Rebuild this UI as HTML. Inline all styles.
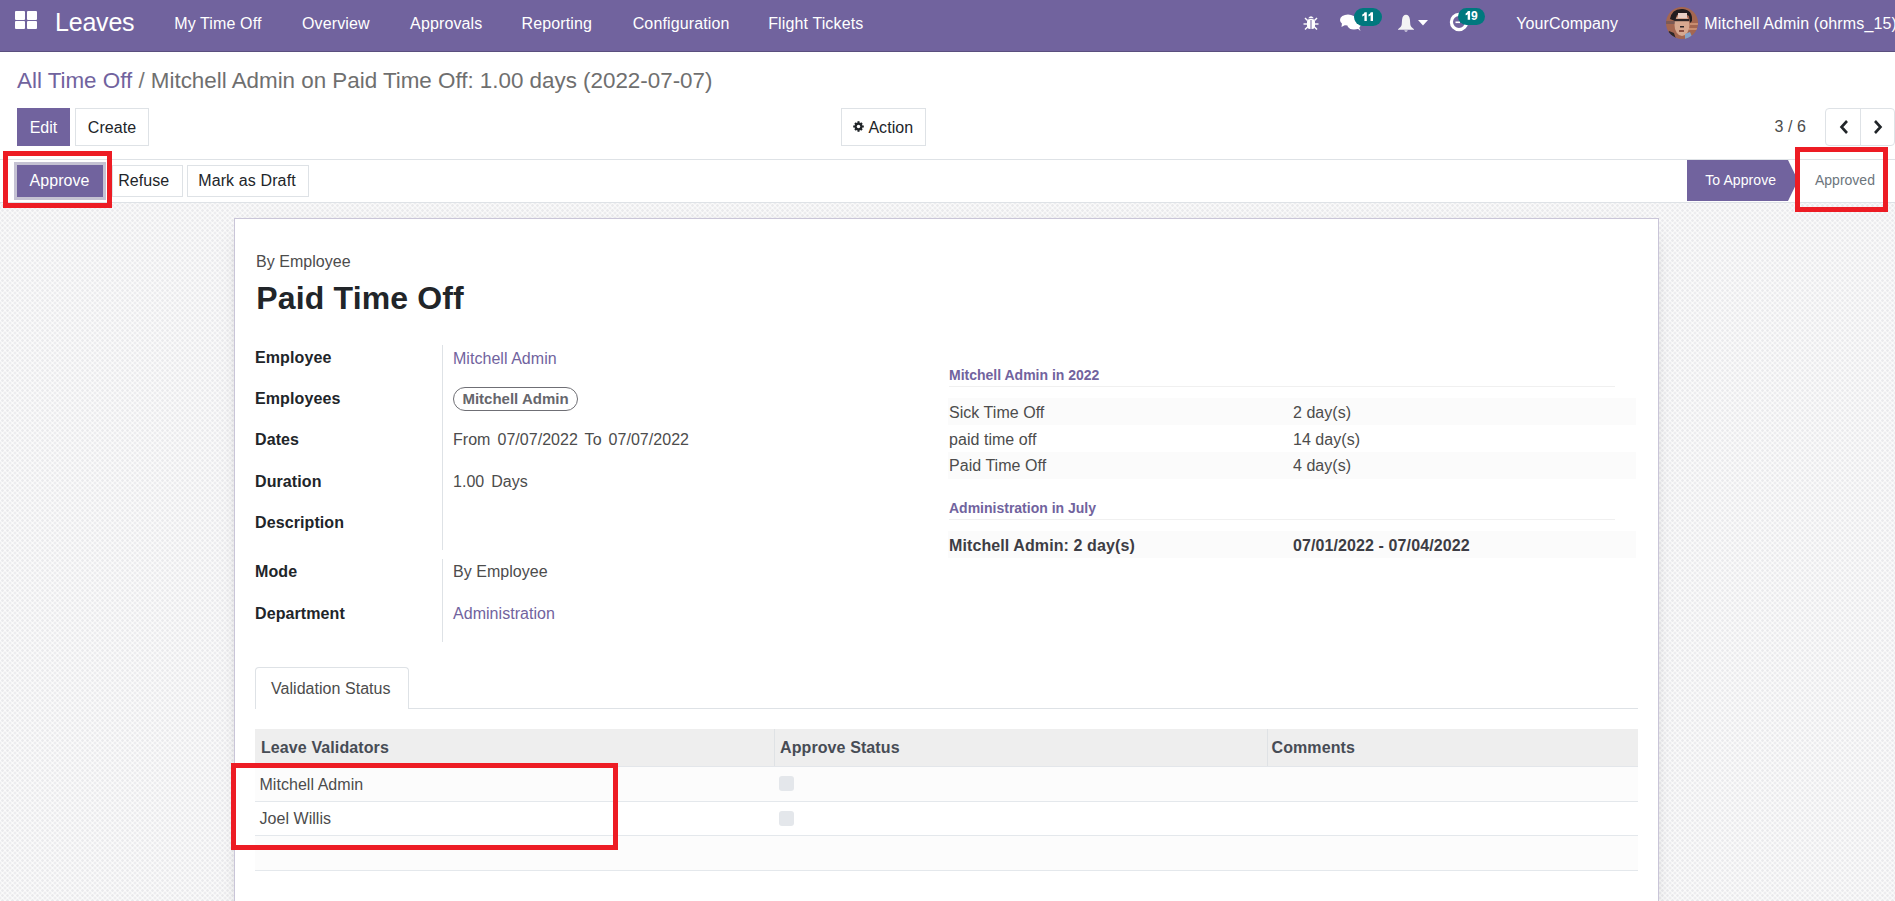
<!DOCTYPE html>
<html><head><meta charset="utf-8"><title>Leaves</title>
<style>
html,body{margin:0;padding:0;width:1895px;height:901px;overflow:hidden;background:#fff;}
body{position:relative;font-family:"Liberation Sans", sans-serif;}
.t{position:absolute;white-space:nowrap;}
.r{position:absolute;}
</style></head><body>
<div class="r" style="left:0px;top:0px;width:1895px;height:51px;background:#71639e"></div>
<div class="r" style="left:0px;top:51px;width:1895px;height:1px;background:#5a4f7e"></div>
<div class="r" style="left:15px;top:11px;width:10px;height:9px;background:#fff;border-radius:1px"></div>
<div class="r" style="left:26.5px;top:11px;width:10.5px;height:9px;background:#fff;border-radius:1px"></div>
<div class="r" style="left:15px;top:21px;width:10px;height:8px;background:#fff;border-radius:1px"></div>
<div class="r" style="left:26.5px;top:21px;width:10.5px;height:8px;background:#fff;border-radius:1px"></div>
<div class="t" style="left:55px;top:7.03px;font-size:25px;line-height:31px;font-weight:400;color:#fff;letter-spacing:-0.2px">Leaves</div>
<div class="t" style="left:174.2px;top:14.05px;font-size:16px;line-height:20px;font-weight:400;color:#fff;letter-spacing:0.13px">My Time Off</div>
<div class="t" style="left:302px;top:14.05px;font-size:16px;line-height:20px;font-weight:400;color:#fff;letter-spacing:0.13px">Overview</div>
<div class="t" style="left:410.1px;top:14.05px;font-size:16px;line-height:20px;font-weight:400;color:#fff;letter-spacing:0.13px">Approvals</div>
<div class="t" style="left:521.5px;top:14.05px;font-size:16px;line-height:20px;font-weight:400;color:#fff;letter-spacing:0.13px">Reporting</div>
<div class="t" style="left:632.7px;top:14.05px;font-size:16px;line-height:20px;font-weight:400;color:#fff;letter-spacing:0.13px">Configuration</div>
<div class="t" style="left:768.2px;top:14.05px;font-size:16px;line-height:20px;font-weight:400;color:#fff;letter-spacing:0.13px">Flight Tickets</div>
<div class="t" style="left:1516.3px;top:13.95px;font-size:16px;line-height:20px;font-weight:400;color:#fff;letter-spacing:0.1px">YourCompany</div>
<div class="t" style="left:1704.3px;top:13.95px;font-size:16px;line-height:20px;font-weight:400;color:#fff;letter-spacing:0.13px">Mitchell Admin (ohrms_15)</div>
<svg class="r" style="left:1666px;top:7px" width="32" height="32" viewBox="0 0 32 32">
<defs><clipPath id="av"><circle cx="16" cy="16" r="16"/></clipPath></defs>
<g clip-path="url(#av)">
<rect width="32" height="32" fill="#a46650"/>
<rect x="0" y="14" width="9" height="3" fill="#7d5a55"/>
<rect x="24" y="16" width="8" height="2" fill="#c98d70"/>
<rect x="23" y="21" width="9" height="2" fill="#c98d70"/>
<path d="M4 12 Q6 1 17 2 Q27 3 26 14 L24 16 L23 9 Q17 5 11 8 L9 14 Z" fill="#211c1e"/>
<ellipse cx="16" cy="18" rx="7.5" ry="11" fill="#d7a890"/>
<rect x="12" y="6" width="9" height="5" fill="#e8cfc5"/>
<rect x="9" y="12" width="14" height="2.2" fill="#2a2326"/>
<rect x="14" y="19" width="4" height="1.5" fill="#2a2326"/>
<rect x="13" y="23" width="5" height="2" fill="#8b4f42"/>
<path d="M19 27 L24 25 L27 32 L19 32 Z" fill="#86a3c8"/>
<path d="M3 24 L8 26 L10 32 L0 32 Z" fill="#2c2628"/>
</g></svg>
<svg class="r" style="left:1302px;top:12.5px" width="18" height="18" viewBox="0 0 18 18">
<g fill="#fff" stroke="#fff">
<path d="M6.2 5.2 Q9 1.2 11.8 5.2 Z" stroke="none"/>
<rect x="5" y="6" width="8" height="10" rx="3" stroke="none"/>
<line x1="3" y1="5" x2="5.5" y2="7.5" stroke-width="1.4"/><line x1="15" y1="5" x2="12.5" y2="7.5" stroke-width="1.4"/>
<line x1="1.5" y1="11" x2="5" y2="11" stroke-width="1.4"/><line x1="16.5" y1="11" x2="13" y2="11" stroke-width="1.4"/>
<line x1="3" y1="16.5" x2="5.5" y2="14" stroke-width="1.4"/><line x1="15" y1="16.5" x2="12.5" y2="14" stroke-width="1.4"/>
</g><line x1="9" y1="7" x2="9" y2="16" stroke="#71639e" stroke-width="1"/></svg>
<svg class="r" style="left:1339px;top:13px" width="24" height="20" viewBox="0 0 24 20">
<g fill="#fff">
<ellipse cx="9" cy="7" rx="8" ry="5.6"/>
<path d="M3 10 L2.5 14 L7 11.5 Z"/>
<ellipse cx="15" cy="12.5" rx="6.5" ry="4" />
<path d="M18 15 L21.5 18 L19.5 13 Z"/>
</g></svg>
<div class="r" style="left:1354px;top:8px;width:28px;height:18px;background:#00787e;border-radius:9px"></div>
<svg class="r" style="left:1397px;top:14px" width="18" height="19" viewBox="0 0 18 19">
<path fill="#f4f4f4" d="M9 0.8 C6.9 0.8 5.4 2.5 5.1 5.5 L4.7 10.5 C4.5 12.2 3.1 13.7 1 15.2 L1 15.8 L17 15.8 L17 15.2 C14.9 13.7 13.5 12.2 13.3 10.5 L12.9 5.5 C12.6 2.5 11.1 0.8 9 0.8 Z"/>
<path fill="#fff" d="M7.2 16.4 Q9 18.8 10.8 16.4 Z"/>
</svg>
<svg class="r" style="left:1418px;top:19.5px" width="10" height="6" viewBox="0 0 10 6"><path d="M0 0 L10 0 L5 5.5 Z" fill="#fff"/></svg>
<svg class="r" style="left:1449px;top:12px" width="22" height="20" viewBox="0 0 22 20">
<circle cx="10" cy="10" r="7.6" fill="none" stroke="#fff" stroke-width="3.2"/>
<rect x="6.5" y="9.5" width="4.5" height="1.6" fill="#fff"/></svg>
<div class="r" style="left:1458px;top:8px;width:27px;height:17px;background:#00787e;border-radius:8.5px"></div>
<div class="t" style="left:1471px;top:8.84px;font-size:12px;line-height:15px;font-weight:700;color:#fff;">9</div>
<svg class="r" style="left:0;top:0" width="1895" height="40"><path fill="#fff" d="M1364.3999999999999 12.2 H1366.8 V20.9 H1364.3999999999999 V15.299999999999999 Q1363.3999999999999 16.099999999999998 1362.3 16.4 V14.5 Q1363.8999999999999 13.899999999999999 1364.6 12.2 Z M1370.6 12.2 H1373.0 V20.9 H1370.6 V15.299999999999999 Q1369.6 16.099999999999998 1368.5 16.4 V14.5 Q1370.1 13.899999999999999 1370.8 12.2 Z M1467.6999999999998 11.1 H1470.1 V19.8 H1467.6999999999998 V14.2 Q1466.6999999999998 15.0 1465.6 15.3 V13.399999999999999 Q1467.1999999999998 12.799999999999999 1467.8999999999999 11.1 Z"/></svg>
<div class="t" style="left:17px;top:66.53px;font-size:22.4px;line-height:28px;font-weight:400;color:#6f6f6f;letter-spacing:-0.01px"><span style="color:#71639e">All Time Off</span> <span style="color:#777">/</span> Mitchell Admin on Paid Time Off: 1.00 days (2022-07-07)</div>
<div class="r" style="left:17px;top:108px;width:53px;height:38px;background:#71639e"></div>
<div class="t" style="left:17px;top:118.15px;font-size:16px;line-height:20px;font-weight:400;color:#fff;letter-spacing:0.04px;width:53px;text-align:center">Edit</div>
<div class="r" style="left:75px;top:108px;width:74px;height:38px;background:#fff;border:1px solid #dee2e6;box-sizing:border-box"></div>
<div class="t" style="left:75px;top:118.15px;font-size:16px;line-height:20px;font-weight:400;color:#212529;letter-spacing:0.04px;width:74px;text-align:center">Create</div>
<div class="r" style="left:841px;top:108px;width:85px;height:38px;background:#fff;border:1px solid #dee2e6;box-sizing:border-box"></div>
<svg class="r" style="left:853px;top:121px" width="11" height="11" viewBox="0 0 12 12">
<g fill="#212529"><circle cx="6" cy="6" r="4.3"/>
<rect x="4.9" y="0.2" width="2.2" height="11.6"/><rect x="0.2" y="4.9" width="11.6" height="2.2"/>
<rect x="4.9" y="0.6" width="2.2" height="10.8" transform="rotate(45 6 6)"/><rect x="0.6" y="4.9" width="10.8" height="2.2" transform="rotate(45 6 6)"/>
</g><circle cx="6" cy="6" r="1.9" fill="#fff"/></svg>
<div class="t" style="left:868.4px;top:118.15px;font-size:16px;line-height:20px;font-weight:400;color:#212529;letter-spacing:0.04px;">Action</div>
<div class="t" style="left:1774.5px;top:116.75px;font-size:16px;line-height:20px;font-weight:400;color:#4c4c4c;letter-spacing:0.04px;">3 / 6</div>
<div class="r" style="left:1825px;top:108px;width:70px;height:38px;background:#fff;border:1px solid #dee2e6;box-sizing:border-box;border-radius:4px"></div>
<div class="r" style="left:1860px;top:108px;width:1px;height:38px;background:#dee2e6"></div>
<svg class="r" style="left:1838px;top:119px" width="12" height="16" viewBox="0 0 12 16"><path d="M9 2 L3.5 8 L9 14" fill="none" stroke="#212529" stroke-width="2.6"/></svg>
<svg class="r" style="left:1872px;top:119px" width="12" height="16" viewBox="0 0 12 16"><path d="M3 2 L8.5 8 L3 14" fill="none" stroke="#212529" stroke-width="2.6"/></svg>
<div class="r" style="left:0px;top:159px;width:1895px;height:1px;background:#dee2e6"></div>
<div class="r" style="left:0px;top:160px;width:1895px;height:42px;background:#fff"></div>
<div class="r" style="left:0px;top:202px;width:1895px;height:1px;background:#dee2e6"></div>
<div class="r" style="left:14px;top:162px;width:92px;height:38px;background:#c5c2d3"></div>
<div class="r" style="left:17px;top:165px;width:86px;height:32px;background:#71639e"></div>
<div class="t" style="left:16.5px;top:170.85px;font-size:16px;line-height:20px;font-weight:400;color:#fff;letter-spacing:0.04px;width:86px;text-align:center">Approve</div>
<div class="r" style="left:111.5px;top:165px;width:71px;height:32px;background:#fff;border:1px solid #dee2e6;box-sizing:border-box"></div>
<div class="t" style="left:118.2px;top:170.85px;font-size:16px;line-height:20px;font-weight:400;color:#212529;letter-spacing:0.04px;">Refuse</div>
<div class="r" style="left:187px;top:165px;width:122px;height:32px;background:#fff;border:1px solid #dee2e6;box-sizing:border-box"></div>
<div class="t" style="left:198.2px;top:170.85px;font-size:16px;line-height:20px;font-weight:400;color:#212529;letter-spacing:0.12px">Mark as Draft</div>
<svg class="r" style="left:1687px;top:160px" width="112" height="41" viewBox="0 0 112 41"><path d="M0 0 L101 0 L111 20.5 L101 41 L0 41 Z" fill="#71639e"/></svg>
<div class="t" style="left:1705.2px;top:171.15px;font-size:14px;line-height:18px;font-weight:400;color:#fff;letter-spacing:0.1px">To Approve</div>
<div class="t" style="left:1815px;top:171.15px;font-size:14px;line-height:18px;font-weight:400;color:#6c757d;">Approved</div>
<div class="r" style="left:0px;top:203px;width:1895px;height:698px;background-color:#fbfbfb;background-image:radial-gradient(circle, #e9e9ec 0.9px, rgba(233,233,236,0) 1.6px),radial-gradient(circle, #e9e9ec 0.9px, rgba(233,233,236,0) 1.6px);background-size:5px 5px;background-position:0 0, 2.5px 2.5px"></div>
<div class="r" style="left:234px;top:218px;width:1425px;height:700px;background:#fff;border:1px solid #c9c5d8;box-sizing:border-box;box-shadow:0 5px 20px -15px rgba(0,0,0,0.7)"></div>
<div class="t" style="left:256px;top:252.05px;font-size:16px;line-height:20px;font-weight:400;color:#4c4c4c;letter-spacing:0.04px;">By Employee</div>
<div class="t" style="left:256.3px;top:278.11px;font-size:32px;line-height:40px;font-weight:700;color:#212529;letter-spacing:0.15px">Paid Time Off</div>
<div class="t" style="left:255px;top:348.25px;font-size:16px;line-height:20px;font-weight:700;color:#212529;letter-spacing:0.1px;">Employee</div>
<div class="t" style="left:255px;top:389.15px;font-size:16px;line-height:20px;font-weight:700;color:#212529;letter-spacing:0.1px;">Employees</div>
<div class="t" style="left:255px;top:429.75px;font-size:16px;line-height:20px;font-weight:700;color:#212529;letter-spacing:0.1px;">Dates</div>
<div class="t" style="left:255px;top:472.25px;font-size:16px;line-height:20px;font-weight:700;color:#212529;letter-spacing:0.1px;">Duration</div>
<div class="t" style="left:255px;top:513.35px;font-size:16px;line-height:20px;font-weight:700;color:#212529;letter-spacing:0.1px;">Description</div>
<div class="t" style="left:255px;top:562.45px;font-size:16px;line-height:20px;font-weight:700;color:#212529;letter-spacing:0.1px;">Mode</div>
<div class="t" style="left:255px;top:604.35px;font-size:16px;line-height:20px;font-weight:700;color:#212529;letter-spacing:0.1px;">Department</div>
<div class="r" style="left:442px;top:345px;width:1px;height:205px;background:#dee2e6"></div>
<div class="r" style="left:442px;top:559px;width:1px;height:83px;background:#dee2e6"></div>
<div class="t" style="left:453px;top:349.15px;font-size:16px;line-height:20px;font-weight:400;color:#71639e;letter-spacing:0.04px;">Mitchell Admin</div>
<div class="r" style="left:453px;top:387.2px;width:125px;height:23.5px;border:1px solid #6f6f75;border-radius:12px;box-sizing:border-box"></div>
<div class="t" style="left:453px;top:388.80px;font-size:15px;line-height:19px;font-weight:700;color:#66666c;width:125px;text-align:center">Mitchell Admin</div>
<div class="t" style="left:453px;top:429.75px;font-size:16px;line-height:20px;font-weight:400;color:#4c4c4c;letter-spacing:0.04px;word-spacing:-1px">From&nbsp; 07/07/2022&nbsp; To&nbsp; 07/07/2022</div>
<div class="t" style="left:453px;top:472.25px;font-size:16px;line-height:20px;font-weight:400;color:#4c4c4c;letter-spacing:0.04px;word-spacing:-1px">1.00&nbsp; Days</div>
<div class="t" style="left:453px;top:562.45px;font-size:16px;line-height:20px;font-weight:400;color:#4c4c4c;letter-spacing:0.04px;">By Employee</div>
<div class="t" style="left:453px;top:604.35px;font-size:16px;line-height:20px;font-weight:400;color:#71639e;letter-spacing:0.04px;">Administration</div>
<div class="t" style="left:949px;top:365.75px;font-size:14px;line-height:18px;font-weight:700;color:#71639e;">Mitchell Admin in 2022</div>
<div class="r" style="left:949px;top:386px;width:666px;height:1px;background:#f0f0f0"></div>
<div class="r" style="left:948px;top:398px;width:688px;height:27px;background:#fbfbfb"></div>
<div class="r" style="left:948px;top:452px;width:688px;height:26.5px;background:#fbfbfb"></div>
<div class="t" style="left:949px;top:402.85px;font-size:16px;line-height:20px;font-weight:400;color:#4c4c4c;letter-spacing:0.04px;">Sick Time Off</div>
<div class="t" style="left:1293px;top:402.85px;font-size:16px;line-height:20px;font-weight:400;color:#4c4c4c;letter-spacing:0.04px;">2 day(s)</div>
<div class="t" style="left:949px;top:430.05px;font-size:16px;line-height:20px;font-weight:400;color:#4c4c4c;letter-spacing:0.04px;">paid time off</div>
<div class="t" style="left:1293px;top:430.05px;font-size:16px;line-height:20px;font-weight:400;color:#4c4c4c;letter-spacing:0.04px;">14 day(s)</div>
<div class="t" style="left:949px;top:455.55px;font-size:16px;line-height:20px;font-weight:400;color:#4c4c4c;letter-spacing:0.04px;">Paid Time Off</div>
<div class="t" style="left:1293px;top:455.55px;font-size:16px;line-height:20px;font-weight:400;color:#4c4c4c;letter-spacing:0.04px;">4 day(s)</div>
<div class="t" style="left:949px;top:498.75px;font-size:14px;line-height:18px;font-weight:700;color:#71639e;">Administration in July</div>
<div class="r" style="left:949px;top:519px;width:666px;height:1px;background:#f0f0f0"></div>
<div class="r" style="left:948px;top:531px;width:688px;height:27px;background:#fbfbfb"></div>
<div class="t" style="left:949px;top:535.85px;font-size:16px;line-height:20px;font-weight:700;color:#3d3d44;letter-spacing:0.1px;">Mitchell Admin: 2 day(s)</div>
<div class="t" style="left:1293px;top:535.85px;font-size:16px;line-height:20px;font-weight:700;color:#3d3d44;letter-spacing:0.1px;">07/01/2022 - 07/04/2022</div>
<div class="r" style="left:255px;top:708px;width:1383px;height:1px;background:#dee2e6"></div>
<div class="r" style="left:255px;top:667px;width:154px;height:42px;background:#fff;border:1px solid #dee2e6;border-bottom:none;border-radius:4px 4px 0 0;box-sizing:border-box"></div>
<div class="t" style="left:271px;top:678.75px;font-size:16px;line-height:20px;font-weight:400;color:#4c4c4c;letter-spacing:0.04px;">Validation Status</div>
<div class="r" style="left:255px;top:729px;width:1383px;height:38px;background:#eeeeee"></div>
<div class="r" style="left:774px;top:729px;width:1px;height:37px;background:#dfe2e5"></div>
<div class="r" style="left:1267px;top:729px;width:1px;height:37px;background:#dfe2e5"></div>
<div class="t" style="left:261px;top:737.65px;font-size:16px;line-height:20px;font-weight:700;color:#474c55;letter-spacing:0.1px;">Leave Validators</div>
<div class="t" style="left:780px;top:737.65px;font-size:16px;line-height:20px;font-weight:700;color:#474c55;letter-spacing:0.1px;">Approve Status</div>
<div class="t" style="left:1271.5px;top:737.65px;font-size:16px;line-height:20px;font-weight:700;color:#474c55;letter-spacing:0.1px;">Comments</div>
<div class="r" style="left:255px;top:766px;width:1383px;height:1px;background:#e3e6ea"></div>
<div class="r" style="left:255px;top:767px;width:1383px;height:34px;background:#fcfcfc"></div>
<div class="r" style="left:255px;top:801px;width:1383px;height:1px;background:#e4e8ec"></div>
<div class="r" style="left:255px;top:835px;width:1383px;height:1px;background:#e4e8ec"></div>
<div class="r" style="left:255px;top:836px;width:1383px;height:34px;background:#fcfcfc"></div>
<div class="r" style="left:255px;top:870px;width:1383px;height:1px;background:#e4e8ec"></div>
<div class="t" style="left:259.5px;top:775.35px;font-size:16px;line-height:20px;font-weight:400;color:#4c4c4c;letter-spacing:0.04px;">Mitchell Admin</div>
<div class="t" style="left:259.5px;top:809.35px;font-size:16px;line-height:20px;font-weight:400;color:#4c4c4c;letter-spacing:0.04px;">Joel Willis</div>
<div class="r" style="left:779px;top:776px;width:15px;height:15px;background:#e4e7eb;border-radius:3px"></div>
<div class="r" style="left:779px;top:811px;width:15px;height:15px;background:#e4e7eb;border-radius:3px"></div>
<div class="r" style="left:3px;top:151px;width:109px;height:57px;border:5px solid #ed1c24;box-sizing:border-box"></div>
<div class="r" style="left:1795px;top:147px;width:93px;height:65px;border:5px solid #ed1c24;box-sizing:border-box"></div>
<div class="r" style="left:231px;top:763px;width:387px;height:87px;border:5px solid #ed1c24;box-sizing:border-box"></div>
</body></html>
